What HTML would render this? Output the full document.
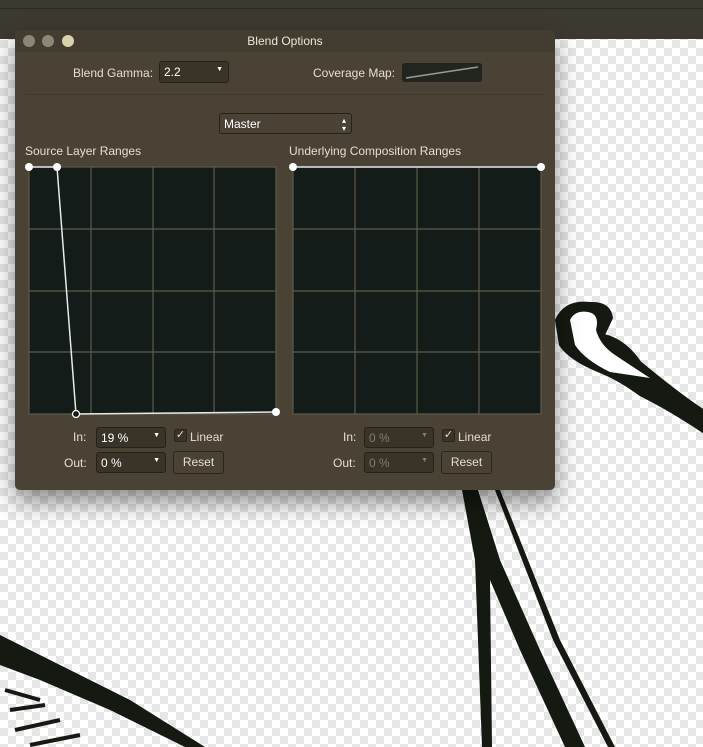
<!DOCTYPE html>
<html><head><style>
*{margin:0;padding:0;box-sizing:border-box}
body{width:703px;height:747px;overflow:hidden;position:relative;font-family:"Liberation Sans",sans-serif;
background-color:#fff;background-image:linear-gradient(45deg,#e6e6e6 25%,transparent 25%,transparent 75%,#e6e6e6 75%),linear-gradient(45deg,#e6e6e6 25%,transparent 25%,transparent 75%,#e6e6e6 75%);background-size:16px 16px;background-position:0 0,8px 8px}
.top{position:absolute;left:0;top:0;width:703px;height:39px;background:#3c3a30}
.top:before{content:"";position:absolute;left:0;top:8px;width:703px;height:1px;background:#2a2a22}
.dlg{position:absolute;left:15px;top:30px;width:540px;height:460px;background:#4a4235;border-radius:5px;box-shadow:0 12px 25px rgba(0,0,0,.45);color:#e4dfcf;font-size:12px}
.tb{height:22px;background:#433c31;border-radius:5px 5px 0 0;text-align:center;line-height:22px;font-size:12px;color:#ece6d3}
.dot{position:absolute;top:5px;width:12px;height:12px;border-radius:50%;background:#8d8575}
.lbl{position:absolute;font-size:12px}
.box{position:absolute;background:#3a3328;border:1px solid #25221b;border-radius:3px;font-size:12px;padding-left:4px;line-height:21px}
.arr{position:absolute;right:5px;top:0;font-size:7px;line-height:16px}
.btn{position:absolute;border:1px solid #2a261f;background:#4a4235;border-radius:3px;text-align:center;line-height:21px;font-size:12px}
.cb{position:absolute;width:13px;height:13px;border:1px solid #2a261f;background:#3a3328;border-radius:2px;font-size:11px;line-height:11px;text-align:center}
</style></head><body>
<div class="top"></div>
<svg style="position:absolute;left:0;top:0" width="703" height="747">
<g fill="#141a12" stroke="#141a12">
<path d="M556 320 Q565 300 590 303 Q610 302 612 318 L604 335 Q625 340 640 362 Q680 395 703 410 L703 432 Q670 410 640 395 Q620 380 600 372 Q570 360 560 345 Z" stroke-width="2"/>
<path d="M570 320 Q575 310 588 312 Q600 314 596 330 Q600 345 615 355 Q630 365 650 378 L610 372 Q585 360 575 345 Z" fill="#fff" stroke="none"/>
<path d="M462 490 L478 490 L500 560 L540 650 L585 747 L565 747 L520 650 L490 580 L492 747 L482 747 L475 560 Z" stroke="none"/>
<path d="M495 490 L500 490 L560 640 L615 747 L608 747 L553 640 Z" stroke="none"/>
<path d="M0 635 L60 665 L130 700 L205 747 L185 747 L110 710 L40 680 L0 665 Z" stroke="none"/>
<path d="M5 690 L40 700 M10 710 L45 705 M15 730 L60 720 M30 745 L80 735" stroke-width="4" fill="none"/>
</g>
</svg>
<div class="dlg">
<div class="tb">Blend Options</div>
<div class="dot" style="left:8px"></div><div class="dot" style="left:27px"></div><div class="dot" style="left:47px;background:#d9d3ad"></div>
<div class="lbl" style="left:58px;top:36px">Blend Gamma:</div>
<div class="box" style="left:144px;top:31px;width:70px;height:22px;color:#fff">2.2<span class="arr">▼</span></div>
<div class="lbl" style="left:298px;top:36px">Coverage Map:</div>
<div class="box" style="left:387px;top:33px;width:80px;height:19px;background:#22241f;padding:0"><svg width="78" height="17"><line x1="3" y1="14" x2="75" y2="3" stroke="#9a9a92" stroke-width="1.5"/></svg></div>
<div style="position:absolute;left:10px;top:64px;width:520px;height:1px;background:#40392e"></div>
<div class="box" style="left:204px;top:83px;width:133px;height:21px;background:#4a4235;color:#fff">Master<span class="arr" style="font-size:8px;line-height:8px;top:3px">▴<br>▾</span></div>
<div class="lbl" style="left:10px;top:114px">Source Layer Ranges</div>
<div class="lbl" style="left:274px;top:114px">Underlying Composition Ranges</div>
<svg style="position:absolute;left:8px;top:130px" width="530" height="258">
<g stroke="#5f5a49" stroke-width="1.2" fill="#141c19">
<rect x="6" y="7" width="247" height="247"/>
<path d="M68 7V254M130 7V254M191 7V254M6 69H253M6 131H253M6 192H253" fill="none"/>
<rect x="270" y="7" width="248" height="247"/>
<path d="M332 7V254M394 7V254M456 7V254M270 69H518M270 131H518M270 192H518" fill="none"/>
</g>
<g stroke="#e8e8e8" stroke-width="1.5" fill="none">
<path d="M6 7H34L53 254L253 252"/>
<path d="M270 7H518"/>
</g>
<g fill="#fff"><circle cx="6" cy="7" r="4"/><circle cx="34" cy="7" r="4"/><circle cx="253" cy="252" r="4"/><circle cx="270" cy="7" r="4"/><circle cx="518" cy="7" r="4"/></g>
<circle cx="53" cy="254" r="3.5" fill="#141c19" stroke="#fff" stroke-width="1.3"/>
</svg>
<div class="lbl" style="left:58px;top:400px">In:</div>
<div class="box" style="left:81px;top:397px;width:70px;height:21px;color:#fff">19 %<span class="arr">▼</span></div>
<div class="cb" style="left:159px;top:399px">✓</div><div class="lbl" style="left:175px;top:400px">Linear</div>
<div class="lbl" style="left:49px;top:426px">Out:</div>
<div class="box" style="left:81px;top:422px;width:70px;height:21px;color:#fff">0 %<span class="arr">▼</span></div>
<div class="btn" style="left:158px;top:421px;width:51px;height:23px">Reset</div>
<div class="lbl" style="left:328px;top:400px">In:</div>
<div class="box" style="left:349px;top:397px;width:70px;height:21px;color:#847c6a">0 %<span class="arr">▼</span></div>
<div class="cb" style="left:427px;top:399px">✓</div><div class="lbl" style="left:443px;top:400px">Linear</div>
<div class="lbl" style="left:318px;top:426px">Out:</div>
<div class="box" style="left:349px;top:422px;width:70px;height:21px;color:#847c6a">0 %<span class="arr">▼</span></div>
<div class="btn" style="left:426px;top:421px;width:51px;height:23px">Reset</div>
</div>
</body></html>
